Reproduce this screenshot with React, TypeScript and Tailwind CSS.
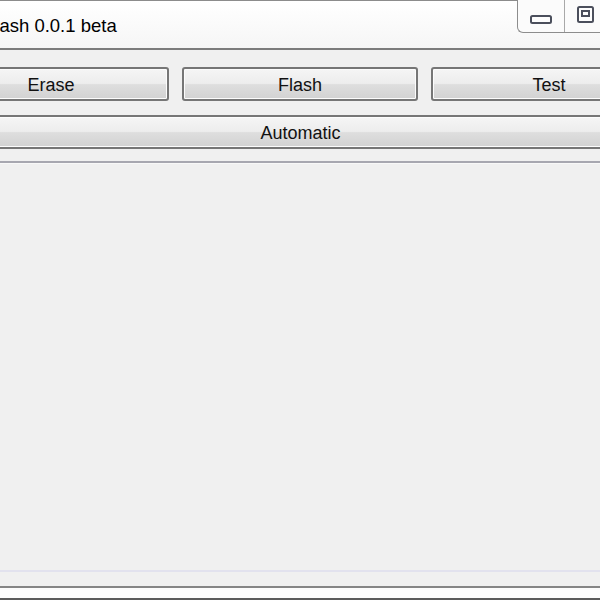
import React from 'react';

// Classic Windows-7-style push button
const WinButton: React.FC<{ label: string; className?: string }> = ({ label, className = '' }) => (
  <button
    className={`h-[34px] rounded-[3px] border-2 border-[#767676] bg-[linear-gradient(to_bottom,#f5f5f5_0%,#ededed_48%,#dedede_52%,#d2d2d2_100%)] pt-[2px] shadow-[inset_0_0_0_1px_#fcfcfc] text-[18px] leading-none text-[#111] ${className}`}
    style={{ fontFamily: '"Liberation Sans", Arial, sans-serif' }}
  >
    {label}
  </button>
);

const WindowControls: React.FC = () => (
  <div className="absolute top-0 left-[517px] flex h-[33px] w-[120px] rounded-bl-[6px] border-b border-l border-[#8d8d8d] bg-[#fbfbfb]">
    <div className="flex w-[47px] items-center justify-center border-r border-[#a8a8a8]">
      <svg width="22" height="10" viewBox="0 0 22 10" className="mt-[8px]">
        <rect x="1" y="1" width="20" height="7" rx="1.5" fill="#fdfdfd" stroke="#4b4f5c" strokeWidth="2" />
      </svg>
    </div>
    <div className="flex w-[40px] items-center justify-center">
      <svg width="18" height="18" viewBox="0 0 18 18" className="mb-[2px] ml-[1px]">
        <rect x="1" y="1" width="15" height="15" rx="1.5" fill="#fdfdfd" stroke="#4b4f5c" strokeWidth="2" />
        <rect x="5" y="5" width="7" height="5" fill="none" stroke="#4b4f5c" strokeWidth="2" />
      </svg>
    </div>
  </div>
);

export default function App() {
  return (
    <div className="relative h-[600px] w-[600px] overflow-hidden bg-[#f0f0f0]">
      <div className="ml-[-80px] flex w-[761px] flex-col">
        {/* Title bar */}
        <div className="relative h-[50px] border-t border-b-2 border-t-[#8c8c8c] border-b-[#7c7c7c] bg-[linear-gradient(to_bottom,#ffffff,#f6f6f6)]">
          <div
            className="absolute top-[11px] left-[64px] text-[18.5px] text-black"
            style={{ fontFamily: '"Liberation Sans", Arial, sans-serif' }}
          >
            Flash 0.0.1 beta
          </div>
        </div>

        {/* Action buttons */}
        <div className="flex flex-col px-[13px] pt-[17px]">
          <div className="flex gap-[13px]">
            <WinButton label="Erase" className="w-[236px]" />
            <WinButton label="Flash" className="w-[236px]" />
            <WinButton label="Test" className="w-[236px]" />
          </div>
          <WinButton label="Automatic" className="mt-[14px] w-full" />

          {/* Output area */}
          <div className="mt-[12px] h-[411px] border-t-2 border-b-2 border-t-[#a7a7b0] border-b-[#e2e2ee] bg-[#f0f0f0] shadow-[inset_0_1px_0_#f8f8f8]" />
        </div>

        {/* Status bar */}
        <div className="mt-[14px] h-[14px] border-t-2 border-b-2 border-t-[#858585] border-b-[#5a5a5a] bg-[#fcfcfc]" />
      </div>

      <WindowControls />
    </div>
  );
}
